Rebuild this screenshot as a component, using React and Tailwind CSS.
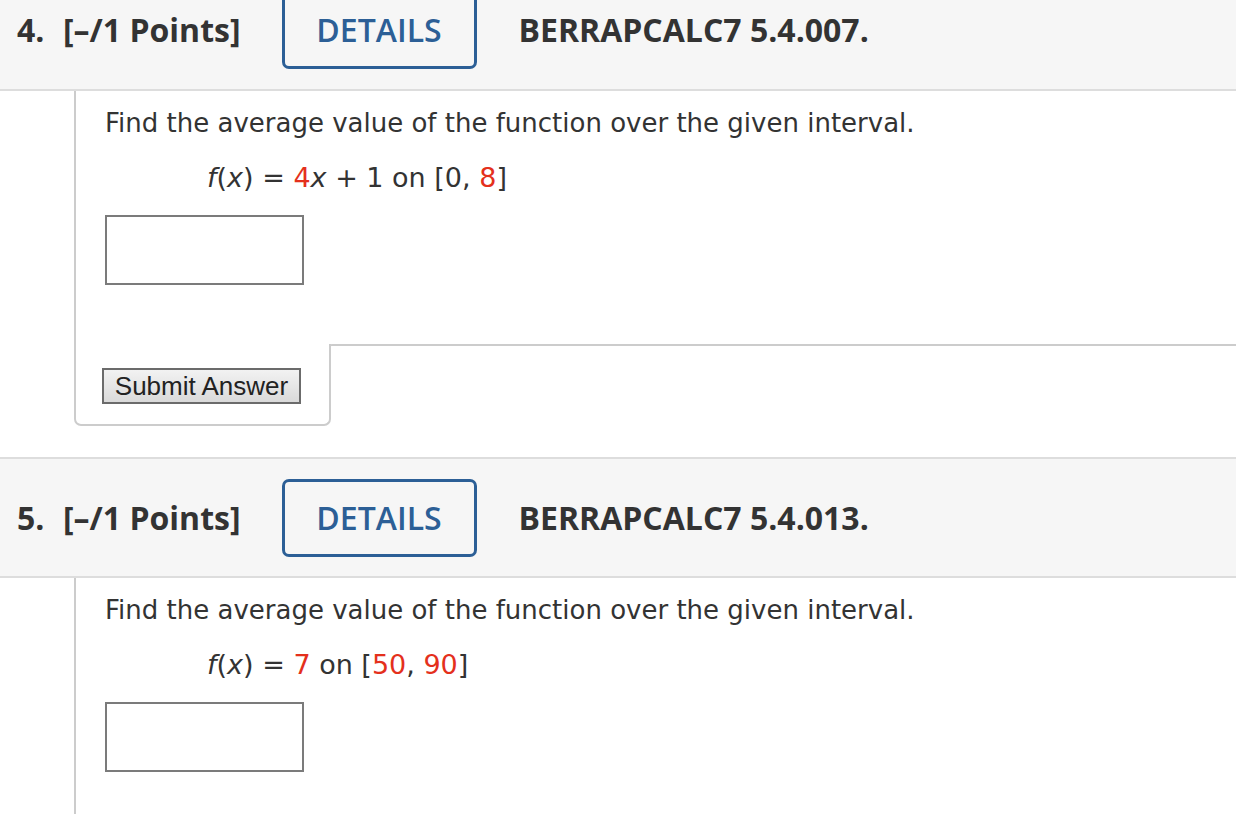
import React from 'react';

const RED = 'text-[#e4301c]';

const Header = ({ num, code, className = '' }) => (
  <div className={`h-[121px] bg-[#f6f6f6] border-y-2 border-[#dddddd] flex items-center pl-[17px] font-['Open_Sans',sans-serif] text-[#333] ${className}`}>
    <span className="w-[46px] text-[32px] font-bold">{num}</span>
    <span className="text-[32px] font-bold">[–/1 Points]</span>
    <button className="ml-[41px] w-[195px] h-[78px] border-[3px] border-[#2c5f96] rounded-[7px] text-[32px] font-semibold text-[#2c5f96]">
      DETAILS
    </button>
    <span className="ml-[42px] text-[32px] font-bold">{code}</span>
  </div>
);

const AnswerBox = () => (
  <div className="w-[199px] h-[70px] border-2 border-[#7b7b7b] bg-white"></div>
);

const Body = ({ children, className = '' }) => (
  <div className={`ml-[74px] border-l-2 border-[#cccccc] pl-[29px] pt-[16px] font-['DejaVu_Sans',Verdana,sans-serif] text-[26px] text-[#333] ${className}`}>
    <p className="leading-[32px]">Find the average value of the function over the given interval.</p>
    <div className="mt-[23px] pl-[102px] text-[27px] leading-[32px]">{children}</div>
    <div className="mt-[21px]">
      <AnswerBox />
    </div>
  </div>
);

export default function App() {
  return (
    <div className="w-[1236px] h-[814px] overflow-hidden bg-white">
      {/* question 4, scrolled partly off the top */}
      <Header num="4." code="BERRAPCALC7 5.4.007." className="-mt-[30px] border-t-0" />
      <Body className="pb-[59px]">
        <i>f</i>(<i>x</i>) = <span className={RED}>4</span><i>x</i> + 1 on [0, <span className={RED}>8</span>]
      </Body>
      <div className="flex">
        <div className="ml-[74px] w-[257px] h-[82px] border-x-2 border-b-2 border-[#cccccc] rounded-b-[7px] pl-[26px] pt-[24px]">
          <button className="w-[199px] h-[36px] border-2 border-[#6b6b6b] bg-gradient-to-b from-[#f2f2f2] to-[#dadada] font-['Liberation_Sans',Arial,sans-serif] text-[26px] text-[#222] leading-none">
            Submit Answer
          </button>
        </div>
        <div className="flex-1 border-t-2 border-[#cccccc] rounded-tl-[3px] -ml-[2px]"></div>
      </div>

      {/* question 5 */}
      <Header num="5." code="BERRAPCALC7 5.4.013." className="mt-[31px]" />
      <Body className="pb-[60px]">
        <i>f</i>(<i>x</i>) = <span className={RED}>7</span> on [<span className={RED}>50</span>, <span className={RED}>90</span>]
      </Body>
    </div>
  );
}
